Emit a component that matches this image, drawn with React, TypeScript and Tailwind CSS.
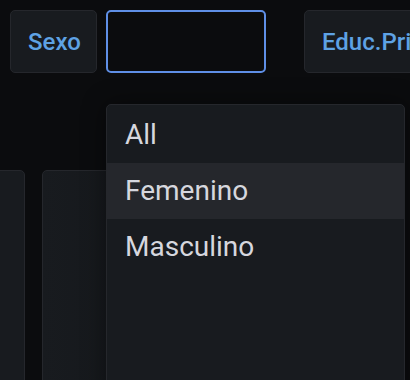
import React from 'react'

// Variable picker: label, focused input, open options list
const options = ['All', 'Femenino', 'Masculino']

const VarLabel: React.FC<{ label: string; className?: string }> = ({ label, className = '' }) => (
  <div
    className={`h-[63px] shrink-0 flex items-center px-[17px] rounded-[5px] border border-[#25272c] bg-[#181b1f] text-[24px] font-medium text-[#5ea2e4] ${className}`}
  >
    {label}
  </div>
)

const App: React.FC = () => {
  const [active] = React.useState('Femenino')

  return (
    <div
      className="relative w-[410px] h-[380px] overflow-hidden bg-[#0b0c0e]"
      style={{ fontFamily: 'Roboto, "Noto Sans", sans-serif' }}
    >
      {/* Variables bar */}
      <div className="flex items-start pt-[10px] pl-[10px]">
        <VarLabel label="Sexo" className="w-[87px]" />
        <div className="ml-[9px] w-[160px] h-[63px] shrink-0 rounded-[5px] border-[2px] border-[#5f8fe6] bg-[#0b0c0e]" />
        <VarLabel label="Educ.Primaria" className="ml-[38px] w-[200px] whitespace-nowrap" />
      </div>

      {/* Dashboard panels */}
      <div className="flex gap-[17px] -ml-[20px] mt-[97px]">
        <div className="w-[45px] h-[260px] shrink-0 rounded-[5px] border border-[#25272c] bg-[#181b1f]" />
        <div className="w-[320px] h-[260px] shrink-0 rounded-[5px] border border-[#25272c] bg-gradient-to-r from-[#181b1f] to-[#0f1013]" />
      </div>

      {/* Options menu */}
      <div className="absolute left-[106px] top-[104px] w-[299px] h-[300px] rounded-[5px] border border-[#25272c] bg-[#181b1f] pt-[2px] shadow-[0_0_24px_rgba(0,0,0,0.45)]">
        {options.map((opt) => (
          <div
            key={opt}
            className={`h-[56px] flex items-center pl-[18px] text-[28px] text-[#d6d7de] ${
              active === opt ? 'bg-[#25272c]' : ''
            }`}
          >
            {opt}
          </div>
        ))}
      </div>
    </div>
  )
}

export default App
